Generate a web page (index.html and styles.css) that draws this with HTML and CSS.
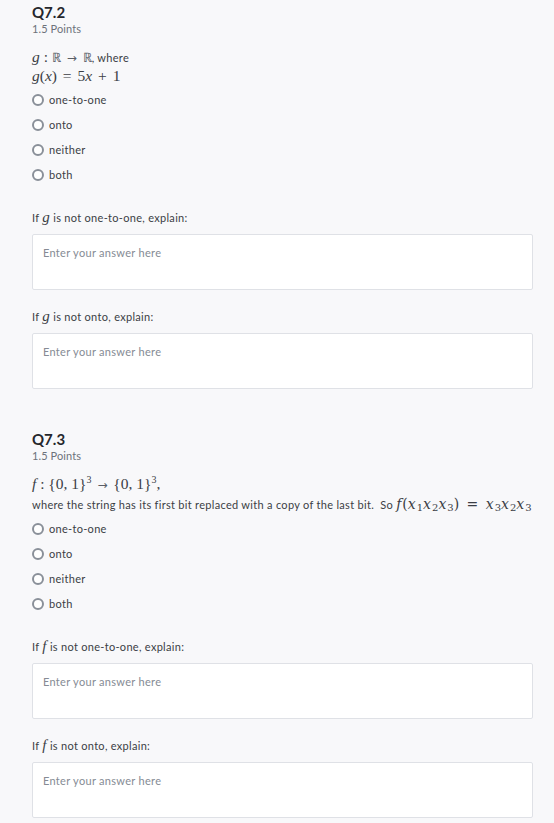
FILE: index.html
```html
<!DOCTYPE html>
<html lang="en">
<head>
    <meta charset="UTF-8">
    <meta name="viewport" content="width=device-width, initial-scale=1.0">
    <title>Q7 - Functions</title>
    <link rel="stylesheet" href="styles.css">
</head>
<body>
    <div class="page">
        <!-- Q7.2 -->
        <div class="question">
            <h3 class="q-title">Q7.2</h3>
            <div class="points">1.5 Points</div>
            <div class="prompt">
                <div class="math-line"><span class="m"><i>g</i> : <span class="bb">ℝ</span> <span class="op arrow">→</span> <span class="bb">ℝ</span></span><span class="txt">, where</span></div>
                <div class="math-line"><span class="m"><i>g</i>(<i>x</i>) <span class="op">=</span> 5<i>x</i> <span class="op">+</span> 1</span></div>
            </div>
            <div class="options">
                <label class="option"><span class="radio"></span>one-to-one</label>
                <label class="option"><span class="radio"></span>onto</label>
                <label class="option"><span class="radio"></span>neither</label>
                <label class="option"><span class="radio"></span>both</label>
            </div>
            <div class="field first">
                <div class="field-label">If <i class="mi">g</i> is not one-to-one, explain:</div>
                <textarea class="answer" placeholder="Enter your answer here"></textarea>
            </div>
            <div class="field">
                <div class="field-label">If <i class="mi">g</i> is not onto, explain:</div>
                <textarea class="answer" placeholder="Enter your answer here"></textarea>
            </div>
        </div>

        <!-- Q7.3 -->
        <div class="question next">
            <h3 class="q-title">Q7.3</h3>
            <div class="points">1.5 Points</div>
            <div class="prompt">
                <div class="math-line tall"><span class="m"><i>f</i> : {0, 1}<sup>3</sup> <span class="op arrow">→</span> {0, 1}<sup>3</sup>,</span></div>
                <div class="math-line"><span class="txt">where the string has its first bit replaced with a copy of the last bit.&nbsp; So </span><span class="m wide"><i>f</i>(<i>x</i><sub>1</sub><i>x</i><sub>2</sub><i>x</i><sub>3</sub>) <span class="op">=</span> <i>x</i><sub>3</sub><i>x</i><sub>2</sub><i>x</i><sub>3</sub></span></div>
            </div>
            <div class="options">
                <label class="option"><span class="radio"></span>one-to-one</label>
                <label class="option"><span class="radio"></span>onto</label>
                <label class="option"><span class="radio"></span>neither</label>
                <label class="option"><span class="radio"></span>both</label>
            </div>
            <div class="field first">
                <div class="field-label">If <i class="mi">f</i> is not one-to-one, explain:</div>
                <textarea class="answer" placeholder="Enter your answer here"></textarea>
            </div>
            <div class="field">
                <div class="field-label">If <i class="mi">f</i> is not onto, explain:</div>
                <textarea class="answer" placeholder="Enter your answer here"></textarea>
            </div>
        </div>
    </div>
</body>
</html>
```

FILE: styles.css
```css
* {
    margin: 0;
    padding: 0;
    box-sizing: border-box;
}
body {
    font-family: Lato, "Open Sans", Arial, sans-serif;
    background-color: #f8f8fa;
    color: #3b3e45;
    font-size: 11px;
    letter-spacing: 0.3px;
}
.page {
    padding: 3px 21px 0 32px;
}
.question.next {
    margin-top: 41px;
}
.q-title {
    font-size: 15px;
    line-height: 18px;
    font-weight: 700;
    color: #25272c;
    letter-spacing: 0;
}
.points {
    margin-top: 1px;
    font-size: 11px;
    line-height: 14px;
    color: #6d727b;
    letter-spacing: 0.1px;
}
.prompt {
    margin-top: 11px;
}
.math-line {
    height: 19px;
    line-height: 19px;
    white-space: nowrap;
}
.math-line.tall {
    height: 21px;
    line-height: 20px;
}
.m {
    font-family: "Liberation Serif", "DejaVu Serif", serif;
    font-size: 15.5px;
    color: #3b3e45;
    letter-spacing: 0;
}
.m i, .mi {
    font-family: "Liberation Serif", "DejaVu Serif", serif;
    font-style: italic;
}
.m .op {
    padding: 0 2px;
}
.m .arrow {
    font-family: "DejaVu Sans", sans-serif;
    font-size: 12px;
    color: #5a5e66;
}
.m .bb {
    font-family: "DejaVu Sans", sans-serif;
    font-size: 13px;
    font-weight: 300;
    color: #5a5e66;
}
.m.wide {
    font-family: "DejaVu Serif", serif;
    font-size: 14px;
}
.m.wide i {
    font-family: "DejaVu Serif", serif;
    padding-right: 1px;
}
.m.wide .op {
    padding: 0 3px;
}
.m sup {
    font-size: 10px;
    vertical-align: 6px;
    line-height: 0;
}
.m sub {
    font-size: 10px;
    vertical-align: -2px;
    line-height: 0;
}
.txt {
    font-size: 11px;
}
.options {
    margin-top: 2px;
    display: flex;
    flex-direction: column;
}
.option {
    display: flex;
    align-items: center;
    height: 25px;
    gap: 5px;
    font-size: 11px;
    color: #3b3e45;
}
.radio {
    width: 12px;
    height: 12px;
    border: 2px solid #8a9099;
    border-radius: 50%;
    background-color: #fff;
}
.field {
    margin-top: 19px;
}
.field.first {
    margin-top: 23px;
}
.field-label {
    line-height: 16px;
    font-size: 11px;
}
.field-label .mi {
    font-size: 15px;
    line-height: 0;
}
.answer {
    display: block;
    margin-top: 8px;
    width: 501px;
    height: 56px;
    padding: 11px 10px;
    border: 1px solid #dfe1e6;
    border-radius: 2px;
    background-color: #fff;
    font-family: Lato, "Open Sans", Arial, sans-serif;
    font-size: 11px;
    letter-spacing: 0.3px;
    line-height: 14px;
    resize: none;
    color: #3b3e45;
}
.answer::placeholder {
    color: #858b94;
}
```
